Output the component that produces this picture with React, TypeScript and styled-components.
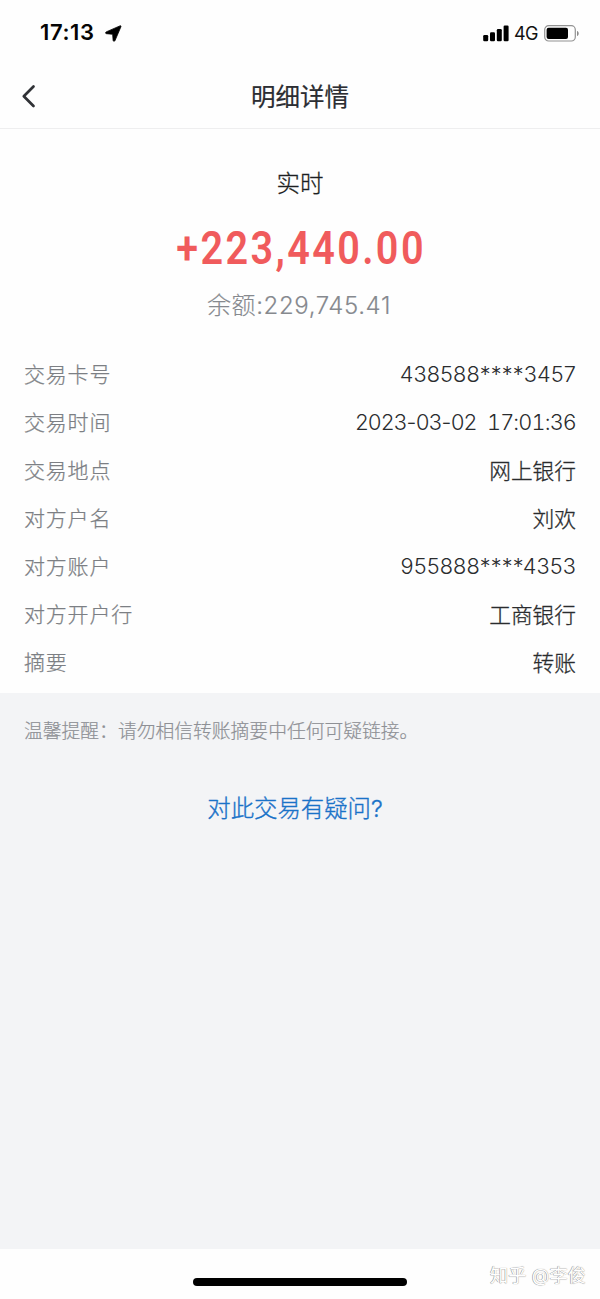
import React from 'react';
import styled, { createGlobalStyle } from 'styled-components';

const GlobalStyle = createGlobalStyle`
  * { box-sizing: border-box; }
  body {
    margin: 0;
    background: #fefefe;
    font-family: Inter, "Noto Sans CJK SC", sans-serif;
  }
`;

const Screen = styled.div`
  width: 600px;
  height: 1299px;
  display: flex;
  flex-direction: column;
  background: #fefefe;
  overflow: hidden;
`;

const StatusBar = styled.header`
  height: 65px;
  padding: 0 20px 0 40px;
  display: flex;
  align-items: center;
  justify-content: space-between;
`;

const StatusGroup = styled.div<{ $gap: number; $top: number }>`
  display: flex;
  align-items: center;
  gap: ${(p) => p.$gap}px;
  padding-top: ${(p) => p.$top}px;
  svg { display: block; }
`;

const Clock = styled.span`
  font-size: 22px;
  font-weight: 600;
  line-height: 26px;
  letter-spacing: 0.6px;
  padding-bottom: 2px;
  color: #050505;
`;

const Network = styled.span`
  font-size: 18px;
  line-height: 22px;
  color: #111;
  letter-spacing: -0.5px;
  margin-left: -1px;
`;

const NavBar = styled.nav`
  height: 64px;
  padding: 0 20px;
  display: grid;
  grid-template-columns: 40px 1fr 40px;
  align-items: center;
  border-bottom: 1px solid #eeeeef;
`;

const BackButton = styled.button`
  padding: 0 0 1px;
  border: 0;
  background: none;
  display: flex;
`;

const Title = styled.h1`
  margin: 0;
  text-align: center;
  font-size: 24.5px;
  line-height: 36px;
  font-weight: 400;
  -webkit-text-stroke: 0.2px currentColor;
  color: #2b2d32;
`;

const Summary = styled.section`
  height: 221px;
  padding-top: 37px;
  display: flex;
  flex-direction: column;
  align-items: center;
`;

const Kind = styled.div`
  font-size: 23.5px;
  line-height: 36px;
  font-weight: 300;
  -webkit-text-stroke: 0.3px currentColor;
  color: #1d1f22;
`;

const Amount = styled.div`
  margin: 19px 0 0 3px;
  font-family: Roboto, sans-serif;
  font-size: 46px;
  line-height: 54px;
  font-weight: 650;
  letter-spacing: 2.8px;
  transform: scaleX(0.86);
  color: #f05b5c;
`;

const Balance = styled.div`
  margin-top: 13px;
  padding-right: 2px;
  font-size: 24px;
  line-height: 36px;
  font-weight: 300;
  letter-spacing: 0.6px;
  -webkit-text-stroke: 0.15px currentColor;
  color: #86898e;
`;

const Details = styled.dl`
  margin: 0;
  height: 343px;
  padding: 0 24px;
`;

const Row = styled.div`
  height: 48px;
  display: flex;
  align-items: center;
  justify-content: space-between;
`;

const Label = styled.dt`
  padding-bottom: 2px;
  font-size: 21px;
  letter-spacing: 0.8px;
  font-weight: 300;
  -webkit-text-stroke: 0.25px currentColor;
  color: #7c7f84;
`;

const Value = styled.dd<{ $numeric?: boolean }>`
  margin: 0;
  padding-bottom: ${(p) => (p.$numeric ? 0 : 2)}px;
  font-size: 21.7px;
  letter-spacing: ${(p) => (p.$numeric ? 0.14 : 0)}px;
  font-weight: ${(p) => (p.$numeric ? 350 : 300)};
  -webkit-text-stroke: ${(p) => (p.$numeric ? 0 : 0.3)}px currentColor;
  white-space: nowrap;
  color: #2a2c2e;
`;

const DatePart = styled.span`
  letter-spacing: -0.45px;
`;

const TimePart = styled.span`
  margin-left: 4px;
  letter-spacing: -0.85px;
  font-variant-numeric: tabular-nums;
`;

const Body = styled.main`
  height: 556px;
  padding: 24px 24px 0;
  background: #f3f4f6;
  display: flex;
  flex-direction: column;
`;

const Notice = styled.p`
  margin: 0;
  font-size: 18.8px;
  line-height: 30px;
  font-weight: 300;
  -webkit-text-stroke: 0.2px currentColor;
  color: #8e9095;
`;

const HelpLink = styled.a`
  align-self: center;
  margin: 44px 10px 0 0;
  font-size: 23.4px;
  line-height: 36px;
  font-weight: 300;
  -webkit-text-stroke: 0.35px currentColor;
  color: #1a72c8;
`;

const Footer = styled.footer`
  position: relative;
  height: 50px;
  display: flex;
  justify-content: center;
  align-items: flex-start;
  padding-top: 29px;
`;

const HomeIndicator = styled.div`
  width: 214px;
  height: 8px;
  border-radius: 4px;
  background: #000;
`;

const Watermark = styled.span`
  position: absolute;
  right: 14px;
  top: 13px;
  font-size: 18.3px;
  line-height: 26px;
  font-weight: 400;
  color: #fff;
  text-shadow: 0 0 1px #888, -0.5px -0.5px 0.5px #999;
`;

type Detail = { label: string; value: React.ReactNode; numeric?: boolean };

const details: Detail[] = [
  { label: '交易卡号', value: '438588****3457', numeric: true },
  {
    label: '交易时间',
    value: (
      <>
        <DatePart>2023-03-02</DatePart> <TimePart>17:01:36</TimePart>
      </>
    ),
    numeric: true,
  },
  { label: '交易地点', value: '网上银行' },
  { label: '对方户名', value: '刘欢' },
  { label: '对方账户', value: '955888****4353', numeric: true },
  { label: '对方开户行', value: '工商银行' },
  { label: '摘要', value: '转账' },
];

const LocationIcon = () => (
  <svg width="17" height="17" viewBox="0 0 17 17">
    <path d="M14.9.9 1.2 6.9c-1 .5-.8 1.7.3 1.8l5.600.5c.4 0 .6.2.6.6l.4 5.500c.1 1.200 1.400 1.400 1.900.3L15.900 1.800c.3-.8-.2-1.300-1-.9Z" fill="#000" stroke="#000" strokeWidth="0.8" strokeLinejoin="round" />
  </svg>
);

const SignalIcon = () => (
  <svg width="26" height="17" viewBox="0 0 26 17">
    <rect x="0.2" y="10" width="5" height="6.3" rx="1.2" />
    <rect x="7" y="7.3" width="5" height="9" rx="1.2" />
    <rect x="13.8" y="4" width="5" height="12.3" rx="1.2" />
    <rect x="20.6" y="0.5" width="5" height="15.8" rx="1.2" />
  </svg>
);

const BatteryIcon = () => (
  <svg width="36" height="17" viewBox="0 0 36 17">
    <rect x="0.7" y="0.7" width="30.6" height="15.3" rx="4" fill="none" stroke="#929292" strokeWidth="1.2" />
    <rect x="2.6" y="2.7" width="21.4" height="11.3" rx="2" />
    <path d="M33 6v5c2.3-.6 2.3-4.400 0-5Z" fill="#8b8b8b" />
  </svg>
);

export default function App() {
  return (
    <Screen>
      <GlobalStyle />
      <StatusBar>
        <StatusGroup $gap={10} $top={1}>
          <Clock>17:13</Clock>
          <LocationIcon />
        </StatusGroup>
        <StatusGroup $gap={6} $top={2}>
          <SignalIcon />
          <Network>4G</Network>
          <BatteryIcon />
        </StatusGroup>
      </StatusBar>
      <NavBar>
        <BackButton aria-label="返回">
          <svg width="18" height="24" viewBox="0 0 18 24" fill="none" stroke="#303236" strokeWidth="2.7" strokeLinecap="round" strokeLinejoin="round">
            <path d="M13.500 2.500 3.800 12.200 13.500 22" />
          </svg>
        </BackButton>
        <Title>明细详情</Title>
      </NavBar>
      <Summary>
        <Kind>实时</Kind>
        <Amount>+223,440.00</Amount>
        <Balance>余额:229,745.41</Balance>
      </Summary>
      <Details>
        {details.map((d) => (
          <Row key={d.label}>
            <Label>{d.label}</Label>
            <Value $numeric={d.numeric}>{d.value}</Value>
          </Row>
        ))}
      </Details>
      <Body>
        <Notice>温馨提醒：请勿相信转账摘要中任何可疑链接。</Notice>
        <HelpLink>对此交易有疑问?</HelpLink>
      </Body>
      <Footer>
        <HomeIndicator />
        <Watermark>知乎 @李俊</Watermark>
      </Footer>
    </Screen>
  );
}
